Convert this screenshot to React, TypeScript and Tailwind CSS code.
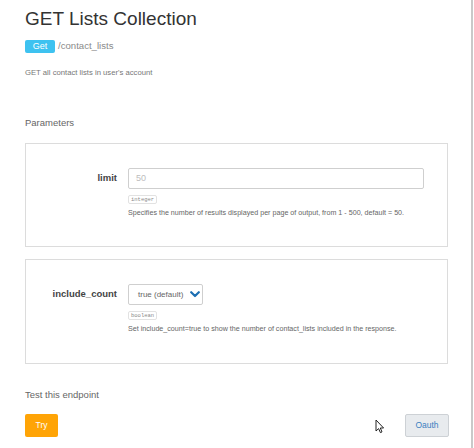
const Cursor = () => (
  <svg
    className="absolute left-[375px] top-[419px]"
    width="10"
    height="15"
    viewBox="0 0 10 15"
  >
    <path
      d="M1 1 L1 12 L3.6 9.6 L5.4 13.6 L7 12.9 L5.3 9 L8.6 9 Z"
      fill="#fff"
      stroke="#222"
      strokeWidth="1"
      strokeLinejoin="round"
    />
  </svg>
);

const Chevron = () => (
  <svg width="10" height="7" viewBox="0 0 10 7" className="ml-[7px]">
    <path
      d="M1.2 1.2 L5 5 L8.8 1.2"
      fill="none"
      stroke="#1d6fb3"
      strokeWidth="2.2"
      strokeLinecap="round"
      strokeLinejoin="round"
    />
  </svg>
);

const TypeTag = ({ label }: { label: string }) => (
  <span className="mt-[6px] inline-flex h-[9px] items-center self-start rounded-[2px] border border-[#e2e2e2] px-[2px] font-['Liberation_Mono',monospace] text-[5.5px] leading-none text-[#888]">
    {label}
  </span>
);

export default function App() {
  return (
    <div className="relative h-[448px] w-[473px] border-r-2 border-[#c9c9c9] bg-white font-['Liberation_Sans',Arial,sans-serif]">
      <div className="flex flex-col pl-[25px] pr-[23px] pt-[8px]">
        <h1 className="text-[19px] leading-[22px] text-[#333]">
          GET Lists Collection
        </h1>
        <div className="mt-[10px] flex h-[13px] items-center">
          <span className="flex h-[13px] w-[30px] items-center justify-center rounded-[2px] bg-[#3ec2f0] text-[9px] text-white">
            Get
          </span>
          <span className="ml-[3px] text-[9.6px] text-[#8a8a8a]">
            /contact_lists
          </span>
        </div>
        <p className="mt-[15px] text-[7.7px] leading-[10px] text-[#777]">
          GET all contact lists in user's account
        </p>
        <h2 className="mt-[39px] text-[9.5px] leading-[12px] text-[#666]">
          Parameters
        </h2>

        <div className="mt-[14px] flex flex-col border border-[#dcdcdc] pb-[28px] pt-[24px]">
          <div className="flex">
            <div className="flex h-[21px] w-[91px] items-center justify-end text-[9.5px] font-bold text-[#444]">
              limit
            </div>
            <div className="ml-[11px] flex flex-col">
              <div className="flex h-[21px] w-[296px] items-center rounded-[2px] border border-[#cfcfcf] px-[7px] text-[9px] text-[#bdbdbd]">
                50
              </div>
              <TypeTag label="integer" />
              <p className="mt-[4px] text-[7.15px] leading-[10px] text-[#666]">
                Specifies the number of results displayed per page of output,
                from 1 - 500, default = 50.
              </p>
            </div>
          </div>
        </div>

        <div className="mt-[12px] flex flex-col border border-[#dcdcdc] pb-[29px] pt-[24px]">
          <div className="flex">
            <div className="flex h-[21px] w-[91px] items-center justify-end text-[9.5px] font-bold text-[#444]">
              include_count
            </div>
            <div className="ml-[11px] flex flex-col">
              <div className="flex h-[21px] w-[75px] items-center rounded-[2px] border border-[#cfcfcf] pl-[9px] text-[8px] text-[#666]">
                true (default)
                <Chevron />
              </div>
              <TypeTag label="boolean" />
              <p className="mt-[4px] text-[7.15px] leading-[10px] text-[#666]">
                Set include_count=true to show the number of contact_lists
                included in the response.
              </p>
            </div>
          </div>
        </div>

        <h2 className="mt-[25px] text-[9.5px] leading-[12px] text-[#666]">
          Test this endpoint
        </h2>
        <div className="-mr-[1px] mt-[13px] flex items-center justify-between">
          <button className="flex h-[23px] w-[33px] items-center justify-center rounded-[2px] bg-[#ffa406] text-[8.5px] text-white">
            Try
          </button>
          <button className="flex h-[23px] w-[44px] items-center justify-center rounded-[2px] border border-[#cdd1d5] bg-[#e8ebee] text-[8.5px] text-[#3b7fc0]">
            Oauth
          </button>
        </div>
      </div>
      <Cursor />
    </div>
  );
}
